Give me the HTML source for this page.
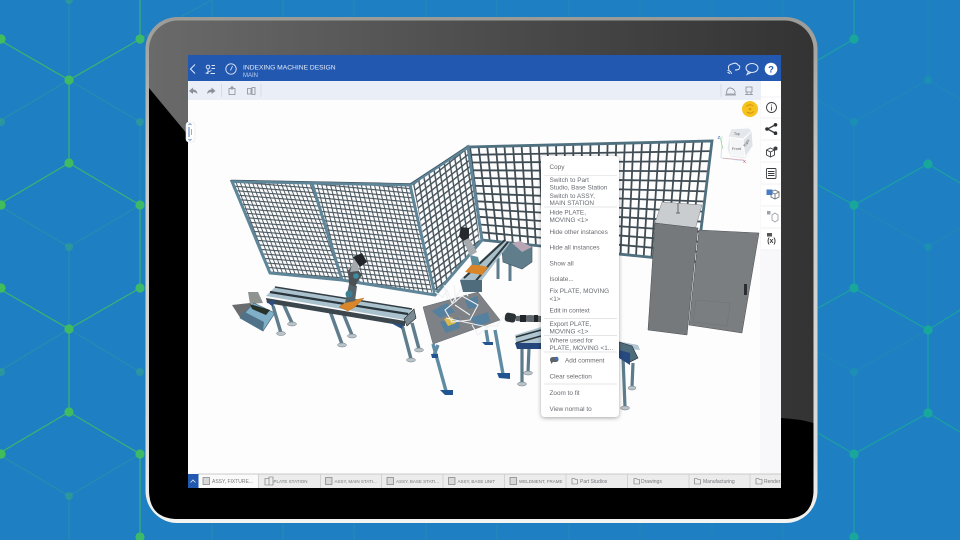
<!DOCTYPE html>
<html><head><meta charset="utf-8"><style>
html,body{margin:0;padding:0;background:#1f7fc3;width:960px;height:540px;overflow:hidden}
svg{display:block;position:absolute;left:0;top:0}
text{font-family:"Liberation Sans",sans-serif}
.m text{font-size:6.4px;fill:#686b70}
.t text{font-size:4.5px;fill:#76787b}
.t text.l{font-size:5px}
</style></head><body>
<svg width="960" height="540" viewBox="0 0 960 540" xmlns="http://www.w3.org/2000/svg">
<defs>
<linearGradient id="g" gradientUnits="userSpaceOnUse" x1="0" y1="0" x2="960" y2="0"><stop offset="0" stop-color="#42bd5c"/><stop offset=".16" stop-color="#3cb96a"/><stop offset=".85" stop-color="#19a79a"/><stop offset="1" stop-color="#17a79b"/></linearGradient>
<linearGradient id="bz" x1="0" y1="0" x2="1" y2="0"><stop offset="0" stop-color="#6a6a6a"/><stop offset=".55" stop-color="#4a4a4a"/><stop offset="1" stop-color="#333"/></linearGradient>
<linearGradient id="rim" x1="0" y1="0" x2="0" y2="1"><stop offset="0" stop-color="#9a9a96"/><stop offset=".3" stop-color="#c9c9c6"/><stop offset=".85" stop-color="#dcdcda"/><stop offset="1" stop-color="#f4f4f2"/></linearGradient>
<pattern id="m1" width="1" height="1" patternUnits="userSpaceOnUse" patternTransform="matrix(4.2 .34 1.7 4.5 231 181)"><path d="M0 0H1V.24H.24V1H0Z" fill="#47545c"/></pattern>
<pattern id="m2" width="1" height="1" patternUnits="userSpaceOnUse" patternTransform="matrix(4.5 .44 1.15 4.6 312 183)"><path d="M0 0H1V.24H.24V1H0Z" fill="#47545c"/></pattern>
<pattern id="m3" width="1" height="1" patternUnits="userSpaceOnUse" patternTransform="matrix(5 -4 1 6 413 184)"><path d="M0 0H1V.26H.26V1H0Z" fill="#47545c"/></pattern>
<filter id="b" x="-5%" y="-5%" width="110%" height="110%"><feGaussianBlur stdDeviation=".35"/></filter>
<filter id="sh" x="-20%" y="-10%" width="140%" height="120%"><feDropShadow dx="0" dy="1" stdDeviation="2" flood-color="#000" flood-opacity=".35"/></filter>
</defs>
<rect width="960" height="540" fill="#1f7fc3"/>
<!-- hex background -->
<g stroke="url(#g)" stroke-width=".9" fill="none" opacity=".28">
<path d="M69 0V80M69 80L-2 122M69 80L140 122M140 122V205M-2 205L69 247L140 205M69 247V329M69 329L-2 372M69 329L140 372M-2 454L69 496L140 454M69 496V540M140 39L212 0M212 0V18M283 0V18M354 0V18M426 0V18M497 0V18M569 0V18M640 0V18M712 0V18M783 0V18"/>
<path d="M928 0V80M854 122L928 80L960 99M854 122L818 100M854 122V205M854 205L928 247L960 228M928 247V330M854 372L928 330M854 372L818 352M854 372V454M212 523V540M283 523V540M354 523V540M426 523V540M497 523V540M569 523V540M640 523V540M712 523V540M783 523V540"/>
</g>
<g stroke="url(#g)" stroke-width="1.2" fill="none" opacity=".85">
<path d="M140 0V39L69 80L-2 39M69 80V163L-2 205M69 163L140 205V288L69 329L-2 288M69 329V412L-2 454M69 412L140 454V540"/>
<path d="M854 0V39L818 60M818 185L854 205L928 164L960 183M854 205V288L818 308M854 288L928 330L960 310M928 330V413L854 454L818 433M928 413L960 432M854 454V540"/>
</g>
<g fill="url(#g)">
<circle cx="69" cy="80" r="4.6"/><circle cx="1" cy="39" r="4.6"/><circle cx="140" cy="39" r="4.6"/><circle cx="69" cy="163" r="4.6"/><circle cx="1" cy="205" r="4.6"/><circle cx="140" cy="205" r="4.6"/><circle cx="1" cy="288" r="4.6"/><circle cx="140" cy="288" r="4.6"/><circle cx="69" cy="329" r="4.6"/><circle cx="69" cy="412" r="4.6"/><circle cx="1" cy="454" r="4.6"/><circle cx="140" cy="454" r="4.6"/><circle cx="140" cy="537" r="4.6"/>
<circle cx="854" cy="39" r="4.6"/><circle cx="928" cy="164" r="4.6"/><circle cx="854" cy="205" r="4.6"/><circle cx="854" cy="288" r="4.6"/><circle cx="928" cy="330" r="4.6"/><circle cx="928" cy="413" r="4.6"/><circle cx="854" cy="454" r="4.6"/><circle cx="854" cy="537" r="4.6"/>
</g>
<g fill="url(#g)" opacity=".35">
<circle cx="69" cy="0" r="4"/><circle cx="1" cy="122" r="4"/><circle cx="140" cy="122" r="4"/><circle cx="69" cy="247" r="4"/><circle cx="1" cy="372" r="4"/><circle cx="140" cy="372" r="4"/><circle cx="69" cy="496" r="4"/>
<circle cx="928" cy="80" r="4"/><circle cx="854" cy="122" r="4"/><circle cx="928" cy="247" r="4"/><circle cx="854" cy="372" r="4"/>
</g>
<!-- tablet -->
<rect x="145.500" y="17" width="672" height="506" rx="32" fill="url(#rim)"/>
<rect x="149" y="20.500" width="664.500" height="498.500" rx="29" fill="url(#bz)"/>
<path d="M149 88L188 135V488H781V418Q800 419 813.500 423V490Q813.500 519 784 519H178Q149 519 149 490Z" fill="#000"/>
<!-- screen -->
<rect x="188" y="55" width="593" height="433" fill="#fdfdfe"/>
<rect x="188" y="55" width="593" height="26" fill="#2358b0"/>
<rect x="188" y="81" width="573" height="19" fill="#e9eef7"/>
<rect x="761" y="81" width="20" height="19" fill="#fff"/>
<rect x="760" y="100" width="21" height="374" fill="#f8f8fa"/>
<!-- header -->
<path d="M195 64.500L190.500 69L195 73.500" fill="none" stroke="#dbe6f7" stroke-width="1.100"/>
<g fill="none" stroke="#dbe6f7" stroke-width=".9">
<circle cx="208" cy="67" r="1.800"/><path d="M208 69V73.500L205.500 73M207 72.500L211.500 70.500M211.500 65.500H215M211.500 68.500H215M210.500 73.500H215"/>
<circle cx="231" cy="69" r="5.200"/><path d="M232.500 66L230.500 70.500"/>
</g>
<text x="243" y="69.300" font-size="6.700" fill="#e3ebf8">INDEXING MACHINE DESIGN</text>
<text x="243" y="77" font-size="6" fill="#bcd0ee">MAIN</text>
<g fill="none" stroke="#e3ebf8" stroke-width="1">
<path d="M729 70Q727 65 732 64Q736 62 738 65Q741 66 739 69Q738 70 735 70"/><path d="M727.500 70.500Q731 70.500 731.500 74M727.500 72.500Q729.500 72.500 729.500 74"/>
<ellipse cx="752" cy="68" rx="6" ry="4.500"/><path d="M748.500 71.500L747 74.500L751 72.500" />
</g>
<circle cx="771" cy="69" r="6.300" fill="#fff"/>
<text x="771" y="72.300" font-size="9.500" font-weight="bold" text-anchor="middle" fill="#2358b0">?</text>
<!-- toolbar -->
<g fill="#8a919b">
<path d="M189 91L193 87.500V89.500Q197 89.500 197.500 94Q195.500 92 193 92V94Z"/>
<path d="M215.500 91L211.500 87.500V89.500Q207.500 89.500 207 94Q209 92 211.500 92V94Z"/>
</g>
<g fill="none" stroke="#868d96" stroke-width=".8">
<path d="M229 88.500H235V94.500H229ZM232 86.500V90M230.500 88L232 86.500L233.500 88"/>
<path d="M247.500 88.500H251V94H247.500ZM252 87.500H255V94.500H252Z"/>
<path d="M726.500 94H735V91.500Q733 87.500 729 88Q726.500 89 726.500 94Z"/><path d="M725 95H736"/>
<path d="M746 87H752V92H746ZM745 94.500H753M747 92V95M751 92V95"/>
</g>
<path d="M221.500 84V97M261 84V97M721 84V97" stroke="#d2d7e0" stroke-width=".8"/>
<!-- left handle -->
<rect x="186" y="122" width="9" height="20" rx="3" fill="#fff" stroke="#e3e5ea" stroke-width=".6"/>
<path d="M188.500 125L190 123.500L191.500 125M188.500 139L190 140.500L191.500 139" stroke="#2358b0" stroke-width=".6" fill="none"/><path d="M189 127V137" stroke="#2358b0" stroke-width=".8"/><path d="M191.500 129V135" stroke="#999" stroke-width=".8"/>
<!-- 3D scene -->
<g filter="url(#b)">
<!-- panel 4 mesh -->
<g fill="none" stroke="#414d54" stroke-width="1.800">
<path d="M470 147L482 240M478.600 146.800L489.700 240.800M487.200 146.600L497.400 241.600M495.800 146.300L505.100 242.400M504.400 146.100L512.800 243.200M513 145.900L520.500 244M521.600 145.700L528.200 244.800M530.200 145.500L535.900 245.600M538.800 145.200L543.600 246.400M547.400 145L551.300 247.200M556 145L559 248M564.600 144.600L566.700 248.800M573.200 144.400L574.400 249.600M581.800 144.100L582.100 250.400M590.400 143.900L589.800 251.200M599 143.700L597.500 252M607.600 143.500L605.200 252.800M616.200 143.300L612.900 253.600M624.800 143L620.600 254.400M633.400 142.800L628.300 255.200M642 142.600L636 256M650.600 142.400L643.700 256.800M659.200 142.200L651.400 257.600M667.800 141.900L659.100 258.400M676.400 141.700L666.800 259.200M685 141.500L674.500 260M693.600 141.300L682.200 260.800M702.200 141.100L689.900 261.600"/>
<path d="M471 154.800L710.800 151.100M472 162.500L709.500 161.200M473 170.300L708.300 171.300M474 178L707 181.300M475 185.800L705.800 191.400M476 193.500L704.500 201.500M477 201.300L703.300 211.600M478 209L702 221.700M479 216.800L700.800 231.800M480 224.500L699.500 241.800M481 232.300L698.300 251.900"/>
</g>
<path d="M468 147L712 141L697 262L482 240Z" fill="none" stroke="#4f6f7f" stroke-width="2.800"/>
<!-- panels 1-3 -->
<path d="M231 181L312 183L342 280L270 273Z" fill="url(#m1)"/>
<path d="M312 183L410 185L433 296L342 280Z" fill="url(#m2)"/>
<path d="M413 184L468 147L480 245L435 295Z" fill="url(#m3)"/>
<g fill="none" stroke="#5e8598" stroke-width="3">
<path d="M232 181.500L312 183L410 185L468 147L482 240L435 295L342 280L270 273Z"/><path d="M312 183L342 280M410 185L435 295"/>
</g>
<g fill="none" stroke="#3c4c56" stroke-width=".6"><path d="M231 180L312 181.500L411 183.500L468 145.500"/></g>
<!-- bin left -->
<path d="M248 292L258 292L263 303L250 304Z" fill="#8f9490"/>
<path d="M232 305L250 303L255 317L241 319Z" fill="#6a6d70"/>
<path d="M240 318L263 331L275 313L254 303Z" fill="#7fb0c8" stroke="#4b6f85" stroke-width=".7"/>
<path d="M240 318L263 331L264 322L243 311Z" fill="#4f7288"/>
<path d="M250 304L270 310L266 315L252 309Z" fill="#25302c"/>
<!-- conveyor 1 legs -->
<g stroke="#5f7d8c" stroke-width="3.400" fill="none">
<path d="M273 306L281 333M283 303L292 323M330 311L342 344M343 313L352 335M402 325L411 359M412 323L419 349"/>
</g>
<g fill="#b9c3c8" stroke="#6c7a82" stroke-width=".5">
<ellipse cx="281" cy="333.500" rx="4.500" ry="2"/><ellipse cx="292" cy="324" rx="4.500" ry="2"/><ellipse cx="342" cy="345" rx="4.500" ry="2"/><ellipse cx="352" cy="336" rx="4.500" ry="2"/><ellipse cx="411" cy="360" rx="4.500" ry="2"/><ellipse cx="419" cy="350" rx="4.500" ry="2"/>
</g>
<!-- conveyor 1 -->
<path d="M266 296L275 287L412 309L405 320Z" fill="#aac2cd"/>
<path d="M266 298L405 321L405 326L267 303Z" fill="#3a464d"/>
<path d="M270 292L408 314" stroke="#2c363c" stroke-width="2.200"/>
<path d="M275 287L412 309" stroke="#333d44" stroke-width="1.500"/>
<path d="M404 319L414 309L416 318L407 326Z" fill="#7a8a92" stroke="#222" stroke-width=".6"/>
<path d="M267 302L275 300L273 307ZM389 322L403 325L402 329Z" fill="#2b4f82"/>
<!-- orange plate + robot 1 -->
<path d="M339 307L346 302L364 298L355 307L348 311Z" fill="#d9862a" stroke="#a8651c" stroke-width=".4"/>
<path d="M345 303L349 284L357 286L355 301Z" fill="#55636a"/>
<path d="M349 284L348 270L355 266L362 275L358 281L355 287Z" fill="#4b5155"/>
<path d="M350 272L354 258L360 256L358 271Z" fill="#a4aaad"/>
<path d="M353 257L362 253L367 262L360 267Z" fill="#23282b"/>
<circle cx="356" cy="276" r="2.800" fill="#3d8fa0"/>
<circle cx="349" cy="294" r="3.500" fill="#3d7f95"/>
<!-- conveyor 2 legs + bin -->
<g stroke="#5f7d8c" stroke-width="3" fill="none"><path d="M498 258V279M510 258V281"/></g>
<path d="M502 250L512 242L532 247L532 262L522 269L503 262Z" fill="#607d8c" stroke="#3e5361" stroke-width=".6"/>
<path d="M512 243L520 241L532 247L522 252Z" fill="#b8a6b6"/>
<!-- table -->
<g stroke="#5f8ba3" stroke-width="3.400" fill="none"><path d="M433 344L446 391M495 330L503 374M486 330L488 342M438 345L434 355"/></g>
<path d="M440 390H453V395L445 395ZM497 373H510V379L499 378ZM482 342H493V345H485ZM431 354H438V358H432Z" fill="#23558f"/>
<path d="M423 307L478 292L500 320L433 344Z" fill="#7e8286" stroke="#61666a" stroke-width=".5"/>
<!-- fixtures -->
<path d="M432 311L447 303L455 312L440 318ZM440 322L458 318L460 328L446 333ZM465 300L478 296L478 307L468 309ZM470 318L488 312L490 322L476 326Z" fill="#55809f"/>
<path d="M444 319L452 317L456 323L448 326Z" fill="#d8b94a"/>
<g fill="none" stroke="#eef0f2" stroke-width="1.100">
<path d="M442 298L447 290L452 303L462 288L468 296M445 310L462 296L478 305L470 320L452 322L445 310ZM455 305L470 315M446 318L478 325L488 327L478 335L472 325M486 326L499 326M497 325L505 315M435 292L444 298"/>
<path d="M448 300L444 285M456 302L454 285"/>
</g>
<!-- conveyor 2 -->
<path d="M460 280L503 240L510 243L482 280L477 285L463 287Z" fill="#a8c0ca"/>
<path d="M464 278L505 240M474 283L508 242" stroke="#2f393f" stroke-width="2" fill="none"/>
<path d="M460 280H482V292H463Z" fill="#4f6c7c"/>
<path d="M465 272L472 264L488 267L482 275Z" fill="#d9862a"/>
<path d="M472 265L470 255L478 257L480 265Z" fill="#5d8d9a"/>
<path d="M470 256L463 240L469 238L477 252Z" fill="#a4aaad"/>
<path d="M459 236L461 227L469 228L469 238L463 241Z" fill="#262b2e"/>
<!-- robot 3 -->
<rect x="505" y="313" width="11" height="9" rx="3" fill="#2c3135" transform="rotate(10 510 317)"/>
<path d="M516 316L530 315L541 316V322L530 322L516 321Z" fill="#60686d"/>
<path d="M520 315H526V322H520ZM534 315H538V322H534Z" fill="#24282b"/>
<!-- conveyor 3 -->
<g stroke="#5c7b8b" stroke-width="3.200" fill="none"><path d="M522 348V383M529 348L528 372M623 357L625 407M633 363L632 387"/></g>
<path d="M515 335L541 327L638 345L640 350L620 349L516 343Z" fill="#b0c6d0"/>
<path d="M516 337L541 330M516 343L541 336" stroke="#2b3439" stroke-width="1.500" fill="none"/>
<path d="M515 343H541V349H517Z" fill="#26477c"/>
<path d="M619 342L632 346L638 358L630 362L619 354Z" fill="#4f6c7c" stroke="#262c30" stroke-width=".6"/>
<path d="M619 350L630 353V365L619 358Z" fill="#264a80"/>
<g fill="#b9c3c8" stroke="#6c7a82" stroke-width=".5"><ellipse cx="522" cy="384" rx="4.500" ry="2"/><ellipse cx="528" cy="373" rx="4.500" ry="2"/><ellipse cx="625" cy="408" rx="4.500" ry="2"/><ellipse cx="632" cy="388" rx="4" ry="2"/></g>
<!-- cabinet -->
<path d="M662 202L702 205L695 230L655 223Z" fill="#c9cdd0" stroke="#7c8084" stroke-width=".5"/>
<path d="M655 223L698 228L687 335L648 330Z" fill="#75797b" stroke="#4b4f52" stroke-width=".5"/>
<path d="M699 230L759 233L742 333L689 325Z" fill="#7a7e80" stroke="#4b4f52" stroke-width=".5"/>
<path d="M696 300L730 303L727 326L693 322Z" fill="none" stroke="#6e7275" stroke-width=".5"/>
<rect x="744" y="284" width="3" height="11" fill="#2c2f31"/>
<path d="M678 203V213M676 213H680" stroke="#666" stroke-width="1"/>
</g>
<!-- nav cube -->
<g>
<path d="M728 149L731 129L749 128L753 146L745 158L731 156Z" fill="#eceff2" stroke="#dfe3e8" stroke-width=".6"/>
<path d="M731 129L749 128L752 131L743 139L728 137Z" fill="#e4e7eb" stroke="#fff" stroke-width=".8"/>
<path d="M730 137L743 140L745 157L731 155Z" fill="#f4f5f7" stroke="#fff" stroke-width=".8"/>
<path d="M743 140L752 131L753 146L745 157Z" fill="#dfe3e7" stroke="#fff" stroke-width=".8"/>
<text x="734" y="135" font-size="3.500" fill="#555">Top</text>
<text x="732" y="150" font-size="3.800" fill="#555">Front</text>
<text x="745" y="147" font-size="3.500" fill="#555" transform="rotate(-55 745 147)">Right</text>
<path d="M722 136L721 158M721 158L745 161" stroke="#c8d4e8" stroke-width=".7" fill="none"/>
<path d="M720 137L723 149" stroke="#9bd09a" stroke-width=".6"/><path d="M723 158L744 160" stroke="#e39a9a" stroke-width=".6"/>
<text x="717.500" y="139" font-size="4.500" fill="#3a5fb5">Z</text>
<text x="743" y="163" font-size="4.500" fill="#c94a55">X</text>
</g>
<circle cx="750" cy="109" r="8" fill="#f6c21c"/>
<path d="M746.500 106.500A4.500 4.500 0 0 1 753 106M753.500 111.500A4.500 4.500 0 0 1 747 112" fill="none" stroke="#c98a12" stroke-width=".9"/>
<circle cx="750" cy="109" r="1.300" fill="#d99c14"/>
<!-- right panel -->
<rect x="761" y="97" width="20" height="153" fill="#fff"/>
<path d="M761 97H781M761 118H781M761 140H781M761 162H781M761 184H781M761 206H781M761 228H781M761 250H781" stroke="#eceef1" stroke-width=".7"/>
<g fill="none" stroke="#3a3d40" stroke-width=".9">
<circle cx="771.500" cy="107.500" r="5"/><path d="M771.500 106.500V110.500M771.500 104.500V105.500"/>
<path d="M767.500 129L775 125M767.500 129L775 133" stroke-width="1.300"/>
<path d="M766.500 150L770.500 148L774.500 150V155L770.500 157L766.500 155ZM766.500 150L770.500 152L774.500 150M770.500 152V157"/>
<rect x="766.500" y="168.500" width="9.500" height="10" rx="1"/><path d="M768 171.500H774.500M768 173.500H774.500M768 175.500H774.500"/>
<path d="M771 192L775 190L779 192V197L775 199L771 197ZM771 192L775 194L779 192M775 194V199" stroke="#6d7175"/>
<path d="M772 215L775 213L778 215V220L775 222L772 220Z" stroke="#9a9ea3"/>
</g>
<circle cx="775.500" cy="148.500" r="2" fill="#3a3d40"/><circle cx="767" cy="129" r="1.800" fill="#2b2e30"/><circle cx="775.500" cy="124.800" r="1.800" fill="#2b2e30"/><circle cx="775.500" cy="133.200" r="1.800" fill="#2b2e30"/>
<rect x="766.500" y="189.500" width="6" height="5.500" fill="#4a7cc4"/>
<rect x="767" y="211" width="3.500" height="3.500" fill="#9ea3a8"/>
<rect x="767" y="233" width="5" height="3.500" fill="#555"/>
<text x="771.500" y="243" font-size="7" font-weight="bold" text-anchor="middle" fill="#333">(x)</text>
<!-- context menu -->
<rect x="541" y="156" width="78" height="261" rx="4" fill="#fff" filter="url(#sh)"/>
<path d="M544 175.700H617M544 207H617M544 318.500H617M544 335.500H617M544 352H617M544 384H617" stroke="#dcdde0" stroke-width=".7"/>
<g class="m">
<text x="549.500" y="169.200">Copy</text>
<text x="549.500" y="182.200">Switch to Part</text>
<text x="549.500" y="189.700">Studio, Base Station</text>
<text x="549.500" y="198.200">Switch to ASSY,</text>
<text x="549.500" y="205.200">MAIN STATION</text>
<text x="549.500" y="214.700">Hide PLATE,</text>
<text x="549.500" y="222.200">MOVING &lt;1&gt;</text>
<text x="549.500" y="234.200">Hide other instances</text>
<text x="549.500" y="249.700">Hide all instances</text>
<text x="549.500" y="265.700">Show all</text>
<text x="549.500" y="281.200">Isolate...</text>
<text x="549.500" y="293.200">Fix PLATE, MOVING</text>
<text x="549.500" y="301.200">&lt;1&gt;</text>
<text x="549.500" y="312.700">Edit in context</text>
<text x="549.500" y="326.200">Export PLATE,</text>
<text x="549.500" y="333.700">MOVING &lt;1&gt;</text>
<text x="549.500" y="342.700">Where used for</text>
<text x="549.500" y="350.200">PLATE, MOVING &lt;1...</text>
<text x="565" y="362.700">Add comment</text>
<text x="549.500" y="378.700">Clear selection</text>
<text x="549.500" y="395.200">Zoom to fit</text>
<text x="549.500" y="411.200">View normal to</text>
</g>
<path d="M550 359.500Q550 357 553.500 357H555.500Q558.500 357 558.500 359.500Q558.500 362 555.500 362H553L551 364V362Q550 361.500 550 359.500Z" fill="#5f6469"/>
<circle cx="556.500" cy="358.500" r="1.800" fill="#3f6fb5"/>
<!-- tabs -->
<rect x="188" y="474" width="593" height="14" fill="#ececec"/>
<path d="M198 474H781" stroke="#bdbdbd" stroke-width=".8"/>
<rect x="198" y="474.500" width="60" height="13.500" fill="#fafafa"/>
<rect x="188" y="474" width="10.500" height="14" fill="#2358b0"/>
<path d="M190.500 482.500L193 480L195.500 482.500" fill="none" stroke="#dbe6f7" stroke-width=".8"/>
<path d="M258.500 474V488M320.500 474V488M381.500 474V488M443 474V488M504.500 474V488M566 474V488M627.500 474V488M689 474V488M750 474V488" stroke="#c8c8c8" stroke-width=".7"/>
<g fill="#d8d8d8" stroke="#6b6d70" stroke-width=".6">
<rect x="203" y="477.500" width="6.500" height="7"/><rect x="325.500" y="477.500" width="6.500" height="7"/><rect x="387" y="477.500" width="6.500" height="7"/><rect x="448.500" y="477.500" width="6.500" height="7"/><rect x="510" y="477.500" width="6.500" height="7"/>
</g>
<path d="M265 478.500H269V485H265ZM269 477H273V485H269Z" fill="none" stroke="#6b6d70" stroke-width=".6"/>
<g fill="none" stroke="#6b6d70" stroke-width=".6">
<path d="M572 478.500H574.500L575.500 479.500H577.500V484H572ZM634 478.500H636.500L637.500 479.500H639.500V484H634ZM694.500 478.500H697L698 479.500H700.500V484H694.500ZM756 478.500H758.500L759.500 479.500H762V484H756Z"/>
</g>
<g class="t">
<text class="l" x="212" y="483">ASSY, FIXTURE...</text>
<text x="273.500" y="483">PLATE STATION</text>
<text x="334.500" y="483">ASSY, MAIN STATI...</text>
<text x="396" y="483">ASSY, BASE STATI...</text>
<text x="457.500" y="483">ASSY, BASE UNIT</text>
<text x="519" y="483">WELDMENT, FRAME</text>
<text class="l" x="580" y="483">Part Studios</text>
<text class="l" x="641" y="483">Drawings</text>
<text class="l" x="703" y="483">Manufacturing</text>
<text class="l" x="764" y="483">Render</text>
</g>
<rect x="781" y="474" width="30" height="14" fill="#000"/>
</svg>
</body></html>
